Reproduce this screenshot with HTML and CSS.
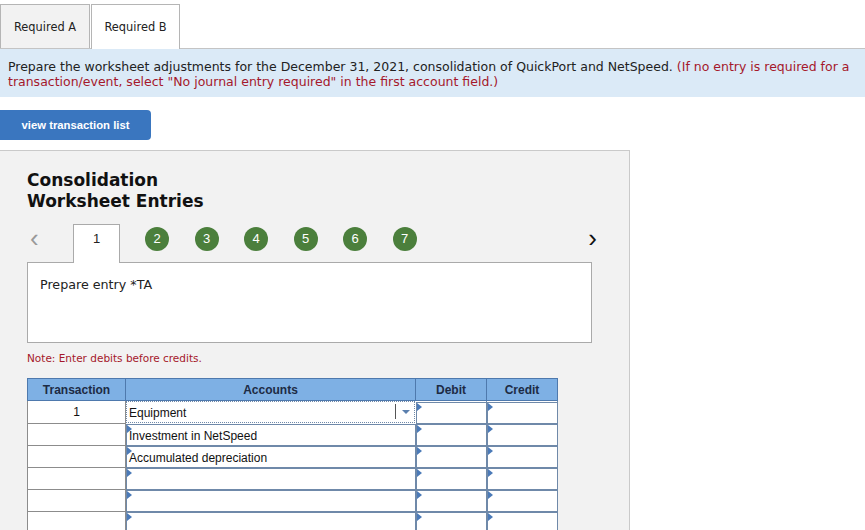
FILE: index.html
```html
<!DOCTYPE html>
<html lang="en">
<head>
  <meta charset="UTF-8">
  <title>Consolidation Worksheet Entries</title>
  <link rel="stylesheet" href="styles.css">
</head>
<body>
  <div class="tabs">
    <div class="tab">Required A</div>
    <div class="tab active">Required B</div>
  </div>

  <div class="instructions">
    Prepare the worksheet adjustments for the December 31, 2021, consolidation of QuickPort and NetSpeed.
    <span class="red">(If no entry is required for a transaction/event, select "No journal entry required" in the first account field.)</span>
  </div>

  <button class="view-btn">view transaction list</button>

  <div class="panel">
    <h2 class="title">Consolidation<br>Worksheet Entries</h2>

    <div class="entry-nav">
      <span class="arrow prev">&lsaquo;</span>
      <div class="entry-tab">1</div>
      <div class="dots">
        <span class="dot">2</span>
        <span class="dot">3</span>
        <span class="dot">4</span>
        <span class="dot">5</span>
        <span class="dot">6</span>
        <span class="dot">7</span>
      </div>
      <span class="arrow next">&rsaquo;</span>
    </div>

    <div class="entry-box">Prepare entry *TA</div>

    <p class="note">Note: Enter debits before credits.</p>

    <table class="journal">
      <thead>
        <tr>
          <th class="c-trans">Transaction</th>
          <th class="c-acct">Accounts</th>
          <th class="c-amt">Debit</th>
          <th class="c-amt">Credit</th>
        </tr>
      </thead>
      <tbody>
        <tr>
          <td class="trans">1</td>
          <td class="acct focus"><div class="field">Equipment<span class="dd"></span></div></td>
          <td class="amt"><div class="field"></div></td>
          <td class="amt"><div class="field"></div></td>
        </tr>
        <tr>
          <td class="trans"></td>
          <td class="acct"><div class="field">Investment in NetSpeed</div></td>
          <td class="amt"><div class="field"></div></td>
          <td class="amt"><div class="field"></div></td>
        </tr>
        <tr>
          <td class="trans"></td>
          <td class="acct"><div class="field">Accumulated depreciation</div></td>
          <td class="amt"><div class="field"></div></td>
          <td class="amt"><div class="field"></div></td>
        </tr>
        <tr>
          <td class="trans"></td>
          <td class="acct"><div class="field"></div></td>
          <td class="amt"><div class="field"></div></td>
          <td class="amt"><div class="field"></div></td>
        </tr>
        <tr>
          <td class="trans"></td>
          <td class="acct"><div class="field"></div></td>
          <td class="amt"><div class="field"></div></td>
          <td class="amt"><div class="field"></div></td>
        </tr>
        <tr>
          <td class="trans"></td>
          <td class="acct"><div class="field"></div></td>
          <td class="amt"><div class="field"></div></td>
          <td class="amt"><div class="field"></div></td>
        </tr>
      </tbody>
    </table>
  </div>
</body>
</html>
```

FILE: styles.css
```css
* {
  box-sizing: border-box;
}

body {
  margin: 0;
  font-family: "DejaVu Sans", Verdana, sans-serif;
  color: #222;
  background: white;
}

/* top tabs */
.tabs {
  display: flex;
  padding-top: 4px;
}
.tab {
  width: 90px;
  height: 44px;
  line-height: 44px;
  text-align: center;
  font-size: 11.4px;
  background: #f2f2f2;
  border: 1px solid #b5b5b5;
  border-bottom: none;
}
.tab.active {
  width: 89px;
  height: 45px;
  margin-left: 1px;
  margin-bottom: -1px;
  background: white;
  position: relative;
  z-index: 1;
}

.instructions {
  background: #dbeaf7;
  border-top: 1px solid #c4c4c4;
  padding: 10px 8px 8px 8px;
  font-size: 12.5px;
  line-height: 15px;
  color: #222;
}
.red {
  color: #a5182b;
}

.view-btn {
  display: block;
  margin-top: 13px;
  width: 151px;
  height: 30px;
  border: none;
  border-radius: 0 4px 4px 0;
  background: #3a76bf;
  color: white;
  font-family: "Liberation Sans", Arial, sans-serif;
  font-weight: bold;
  font-size: 11.3px;
}

/* grey panel */
.panel {
  margin-top: 10px;
  width: 630px;
  min-height: 400px;
  background: #f2f2f2;
  border: 1px solid #cacaca;
  border-left: none;
  padding: 19px 37px 0 27px;
}
.title {
  margin: 0;
  font-size: 17px;
  line-height: 21px;
  font-weight: bold;
  color: #111;
}

.entry-nav {
  display: flex;
  align-items: flex-start;
  margin-top: 12px;
  height: 38px;
}
.arrow {
  font-family: "Liberation Sans", Arial, sans-serif;
  font-size: 26px;
  line-height: 26px;
  margin-top: 1px;
}
.arrow.prev {
  color: #999;
  margin-left: 3px;
  width: 43px;
}
.arrow.next {
  color: #111;
  margin-left: auto;
  margin-right: -5px;
}
.entry-tab {
  width: 47px;
  height: 39px;
  background: white;
  border: 1px solid #aaa;
  border-bottom: none;
  text-align: center;
  font-family: "Liberation Sans", Arial, sans-serif;
  font-size: 13px;
  line-height: 28px;
  position: relative;
  z-index: 1;
}
.dots {
  display: flex;
  gap: 25.5px;
  margin-left: 25px;
  margin-top: 3px;
}
.dot {
  width: 24px;
  height: 24px;
  border-radius: 50%;
  background: #4b7f3c;
  color: white;
  text-align: center;
  font-family: "Liberation Sans", Arial, sans-serif;
  font-size: 13px;
  line-height: 24px;
}

.entry-box {
  height: 81px;
  background: white;
  border: 1px solid #aaa;
  padding: 14px 12px;
  font-size: 12.7px;
}

.note {
  margin: 9px 0 0 0;
  font-size: 10.5px;
  color: #a5182b;
}

/* journal table */
.journal {
  margin-top: 14px;
  border-collapse: collapse;
  font-family: "Liberation Sans", Arial, sans-serif;
  font-size: 12px;
}
.journal th {
  height: 22px;
  padding: 0;
  background: #7eb0e4;
  border: 1px solid #4e79ad;
  color: #1d2b44;
  font-weight: bold;
}
.c-trans { width: 98px; }
.c-acct { width: 290px; }
.c-amt { width: 71px; }

.journal td {
  height: 22px;
  padding: 0;
  background: white;
}
td.trans {
  border: 1px solid #8c8c8c;
  text-align: center;
  color: #111;
}
td.acct, td.amt {
  border: 1px solid #6f89a9;
  border-top: none;
}
.field {
  position: relative;
  height: 21px;
  border-top: 1px solid #6f89a9;
  border-left: 1px solid #6f89a9;
  padding: 4px 2px 0 2px;
  line-height: 15px;
  color: #111;
}
.field::before {
  content: "";
  position: absolute;
  left: 0;
  top: 0;
  border-top: 4px solid transparent;
  border-bottom: 4px solid transparent;
  border-left: 5px solid #4b7ab8;
}
tr:first-child td.acct .field::before {
  display: none;
}
td.focus {
  border-color: white;
}
td.focus .field {
  border: 1px dotted #6f89a9;
  height: 22px;
}
.dd {
  position: absolute;
  right: 0;
  top: 2px;
  width: 19px;
  height: 15px;
  border-left: 1px solid #555;
}
.dd::after {
  content: "";
  position: absolute;
  left: 6px;
  top: 6px;
  border-left: 4px solid transparent;
  border-right: 4px solid transparent;
  border-top: 4px solid #5a7fae;
}
```
